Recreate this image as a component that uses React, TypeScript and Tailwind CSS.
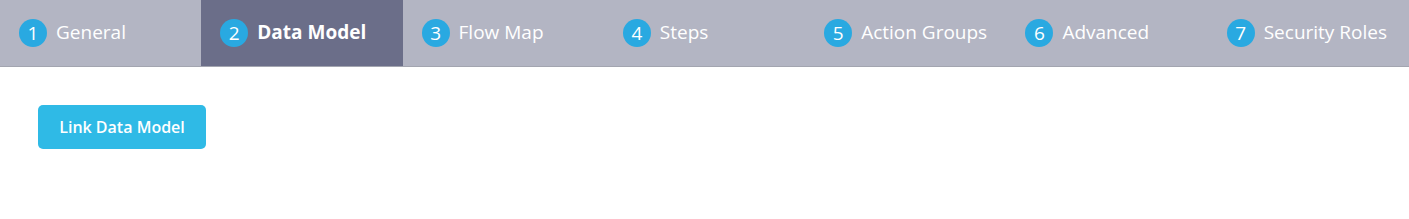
const tabs = [
  "General",
  "Data Model",
  "Flow Map",
  "Steps",
  "Action Groups",
  "Advanced",
  "Security Roles",
];

export default function App() {
  const active = 1;
  return (
    <div className="w-[1409px] h-[219px] bg-white" style={{ fontFamily: '"Open Sans", sans-serif' }}>
      <div className="flex h-[67px] bg-[#b3b5c3] border-b border-[#a3a5b0]">
        {tabs.map((t, i) => (
          <div
            key={t}
            className={
              "flex-1 flex items-center pl-[19px] gap-[9px] text-[19px] text-white " +
              (i === active ? "bg-[#6b6e89] font-bold" : "")
            }
          >
            <span className="w-[28px] h-[28px] rounded-full bg-[#29a9e1] flex items-center justify-center text-[19px] font-normal leading-none">
              {i + 1}
            </span>
            <span className="leading-none pb-[2px]">{t}</span>
          </div>
        ))}
      </div>
      <div className="pl-[38px] pt-[38px]">
        <button className="h-[44px] w-[168px] rounded-[5px] bg-[#2fbae6] text-white text-[16px] font-semibold">
          Link Data Model
        </button>
      </div>
    </div>
  );
}
